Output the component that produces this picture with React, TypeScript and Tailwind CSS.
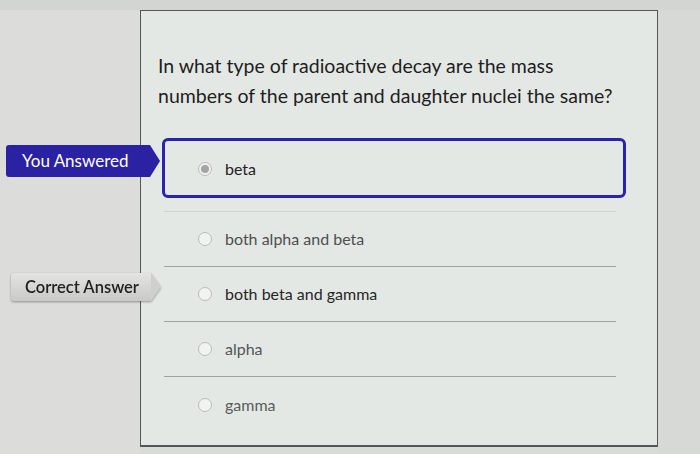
import React from 'react';

const options = [
  { label: 'both alpha and beta', tone: 'text-[#4d4f4e]' },
  { label: 'both beta and gamma', tone: 'text-[#262626]', correct: true },
  { label: 'alpha', tone: 'text-[#555756]' },
  { label: 'gamma', tone: 'text-[#5a5c5b]' },
];

const Radio = ({ checked = false }: { checked?: boolean }) => (
  <span className="flex h-[14px] w-[14px] shrink-0 items-center justify-center rounded-full border border-[#b9bcbb] bg-[#f1f3f2]">
    {checked && <span className="h-[8px] w-[8px] rounded-full bg-[#a3a6a5]" />}
  </span>
);

export default function App() {
  return (
    <div
      className="flex h-[454px] w-[700px] flex-col overflow-hidden bg-[#d9dbd8]"
      style={{ fontFamily: 'Lato, "Open Sans", sans-serif' }}
    >
      <div className="h-[10px] shrink-0 bg-[#d3d5d2]" />
      <div className="flex flex-1">
        <div className="w-[140px] shrink-0 bg-[#dcdddb]" />
        <div className="relative mb-[7px] w-[518px] border-x border-t border-b-2 border-[#55585a] bg-[#e4e8e5] pt-[40px]">
          <p className="pl-[17px] text-[19.5px] leading-[30px] text-[#1e1e1e]">
            In what type of radioactive decay are the mass
            <br />
            numbers of the parent and daughter nuclei the same?
          </p>

          <div className="relative ml-[21px] mt-[27px] flex h-[60px] w-[464px] items-center gap-[13px] rounded-md border-[3px] border-[#2a22b2] pl-[33px] pt-[2px]">
            <Radio checked />
            <span className="text-[16px] text-[#222]">beta</span>
            <div className="absolute left-[-159px] top-[4px] flex h-[32px] items-center">
              <div className="flex h-full w-[144px] items-center rounded-l-[3px] bg-[#2b21a3] pl-[16px] text-[17px] text-white">
                You Answered
              </div>
              <div className="h-0 w-0 border-y-[16px] border-l-[10px] border-y-transparent border-l-[#2b21a3]" />
            </div>
          </div>

          <div className="ml-[23px] mt-[13px] w-[452px] border-t border-[#cfd3d1]">
            {options.map((o, i) => (
              <div
                key={o.label}
                className={`relative flex h-[55px] items-center gap-[13px] pl-[34px] ${
                  i < options.length - 1 ? 'border-b border-[#9fa3a1]' : ''
                }`}
              >
                <Radio />
                <span className={`text-[16px] ${o.tone}`}>{o.label}</span>
                {o.correct && (
                  <div className="absolute left-[-153px] top-[6px] flex h-[28px] items-center drop-shadow-[0_1px_1px_rgba(0,0,0,0.35)]">
                    <div className="flex h-full w-[140px] items-center rounded-l-[3px] bg-gradient-to-b from-[#e4e4e2] to-[#c9cac8] pl-[14px] text-[16.5px] font-semibold text-[#222]">
                      Correct Answer
                    </div>
                    <div className="h-0 w-0 border-y-[14px] border-l-[10px] border-y-transparent border-l-[#cfd0ce]" />
                  </div>
                )}
              </div>
            ))}
          </div>
        </div>
        <div className="flex-1 bg-[#d7d9d6]" />
      </div>
    </div>
  );
}
